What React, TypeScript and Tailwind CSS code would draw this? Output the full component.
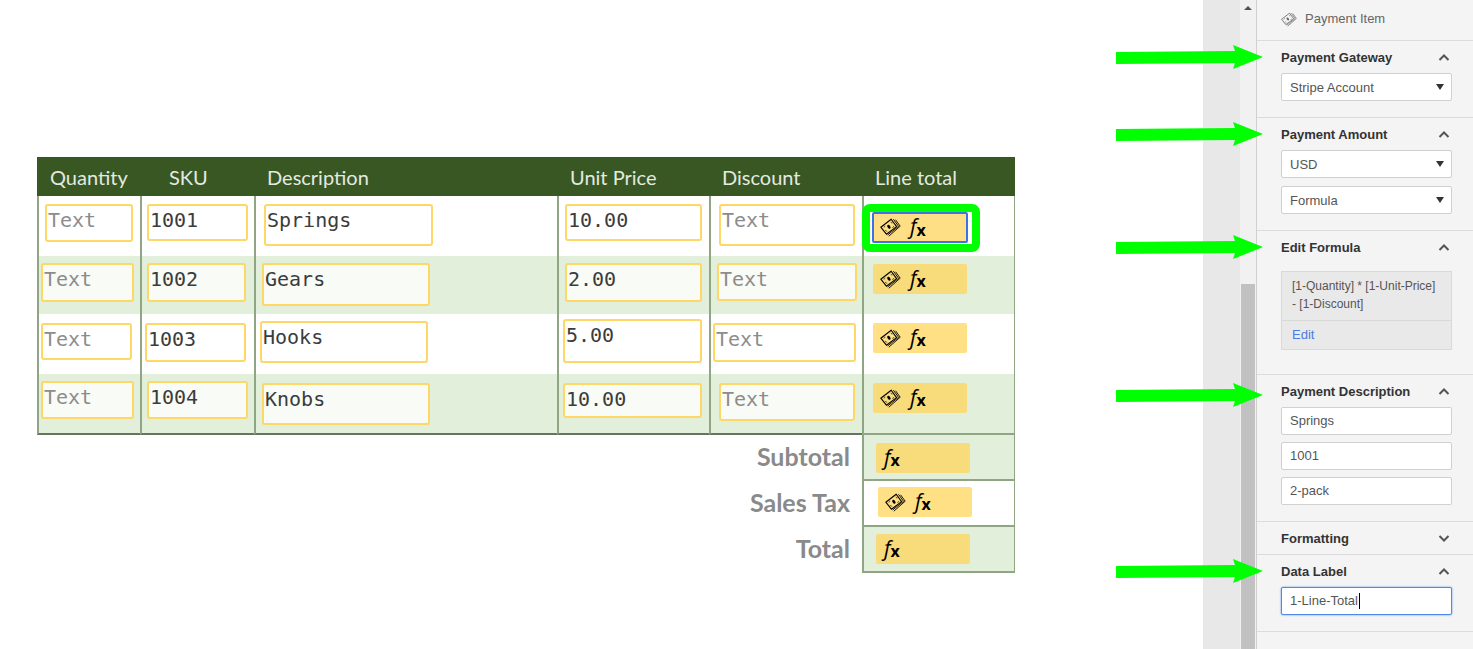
import type { ReactNode } from "react";

type Box = { x: number; y: number; w: number; h: number };
type Field = Box & { value: string };
type Formula = Box & { payment?: boolean; selected?: boolean };

const place = ({ x, y, w, h }: Box) => ({ left: x, top: y, width: w, height: h });

const columns = [
  { label: "Quantity", width: "w-[103px]", pad: "pl-[13px]" },
  { label: "SKU", width: "w-[114px]", pad: "pl-[29px]" },
  { label: "Description", width: "", pad: "pl-[13px]" },
  { label: "Unit Price", width: "w-[152px]", pad: "pl-[13px]" },
  { label: "Discount", width: "w-[153px]", pad: "pl-[13px]" },
  { label: "Line total", width: "w-[153px]", pad: "pl-[13px]" },
];

// Tags are dropped freely on the document; positions are relative to their cell.
const rows: { height: string; tone: string; fields: Field[]; formula: Formula }[] = [
  {
    height: "h-[60px]",
    tone: "bg-white",
    fields: [
      { x: 6, y: 8, w: 88, h: 38, value: "" },
      { x: 5, y: 8, w: 101, h: 37, value: "1001" },
      { x: 8, y: 8, w: 169, h: 42, value: "Springs" },
      { x: 6, y: 8, w: 137, h: 37, value: "10.00" },
      { x: 8, y: 8, w: 136, h: 42, value: "" },
    ],
    formula: { x: 8, y: 16, w: 96, h: 31, payment: true, selected: true },
  },
  {
    height: "h-[58px]",
    tone: "bg-[#e2efda]",
    fields: [
      { x: 2, y: 7, w: 93, h: 39, value: "" },
      { x: 5, y: 7, w: 99, h: 39, value: "1002" },
      { x: 6, y: 7, w: 168, h: 43, value: "Gears" },
      { x: 6, y: 7, w: 137, h: 39, value: "2.00" },
      { x: 6, y: 7, w: 140, h: 38, value: "" },
    ],
    formula: { x: 9, y: 8, w: 94, h: 30, payment: true },
  },
  {
    height: "h-[60px]",
    tone: "bg-white",
    fields: [
      { x: 2, y: 9, w: 91, h: 37, value: "" },
      { x: 3, y: 9, w: 101, h: 39, value: "1003" },
      { x: 4, y: 7, w: 168, h: 42, value: "Hooks" },
      { x: 4, y: 5, w: 139, h: 44, value: "5.00" },
      { x: 2, y: 9, w: 143, h: 39, value: "" },
    ],
    formula: { x: 9, y: 9, w: 94, h: 30, payment: true },
  },
  {
    height: "h-[61px]",
    tone: "bg-[#e2efda]",
    fields: [
      { x: 2, y: 7, w: 93, h: 38, value: "" },
      { x: 5, y: 7, w: 101, h: 38, value: "1004" },
      { x: 6, y: 9, w: 168, h: 42, value: "Knobs" },
      { x: 4, y: 9, w: 139, h: 35, value: "10.00" },
      { x: 8, y: 9, w: 136, h: 38, value: "" },
    ],
    formula: { x: 9, y: 9, w: 94, h: 30, payment: true },
  },
];

const totals: { label: string; tone: string; formula: Formula }[] = [
  { label: "Subtotal", tone: "bg-[#e2efda]", formula: { x: 12, y: 8, w: 94, h: 30 } },
  { label: "Sales Tax", tone: "bg-white", formula: { x: 14, y: 6, w: 94, h: 30, payment: true } },
  { label: "Total", tone: "bg-[#e2efda]", formula: { x: 12, y: 7, w: 94, h: 30 } },
];

function CashIcon({ className }: { className: string }) {
  return (
    <svg viewBox="0 0 21 19" className={className} fill="none" stroke="currentColor" strokeLinejoin="round" aria-hidden="true">
      <path d="M.8 9.2 11.2 1.2 16.6 8.6 6.4 16.2Z" strokeWidth="1.1" />
      <path d="M3.6 9.3c1-.3 1.3-.9 1.2-1.6M10.8 3.8c.3.9 1 1.2 1.7 1M14.1 8.4c-1 .2-1.4.8-1.2 1.5M6.8 13.6c-.2-.9-.9-1.3-1.6-1.1" strokeWidth=".7" />
      <path d="M13.4 1.2 18.6 8.4 7.6 17M15.6 1.8 20.2 8.2 8.8 18.2" strokeWidth=".9" />
      <ellipse cx="8.9" cy="8.8" rx="1.4" ry="2.2" fill="currentColor" stroke="none" transform="rotate(-35 8.9 8.8)" />
    </svg>
  );
}

function FormulaTag({ tag, label }: { tag: Formula; label: string }) {
  return (
    <>
      {tag.selected && (
        <span className="pointer-events-none absolute -left-0.5 top-2 z-10 h-12 w-[118px] rounded-lg border-8 border-[#00ff00]" />
      )}
      <button
        type="button"
        aria-label={label}
        style={place(tag)}
        className={`absolute flex items-center gap-2 rounded-[2px] text-black ${
          tag.selected ? "border-2 border-[#3b74e8] bg-[#ffdf85] pl-1.5" : "bg-[#ffd65b]/75 pl-[7px]"
        }`}
      >
        {tag.payment && <CashIcon className="h-[19px] w-[21px]" />}
        <span className="flex h-full items-center pb-0.5 pl-px font-['Open_Sans',sans-serif] leading-none">
          <i className="text-[21px]">f</i>
          <b className="pt-1.5 text-base leading-none">x</b>
        </span>
      </button>
    </>
  );
}

function Invoice() {
  return (
    <table className="w-full table-fixed border-separate border-spacing-0 text-left">
      <thead>
        <tr className="h-[39px] bg-[#385723] font-['Lato',sans-serif] text-xl text-[#e4eae0]">
          {columns.map((c) => (
            <th key={c.label} className={`p-0 font-normal leading-7 ${c.width} ${c.pad}`}>
              {c.label}
            </th>
          ))}
        </tr>
      </thead>
      <tbody>
        {rows.map((row, r) => (
          <tr key={r} className={`${row.height} ${row.tone}`}>
            {row.fields.map((f, c) => (
              <td
                key={c}
                className={`relative border-l-2 border-[#8fa583] p-0 ${r === 3 ? "border-b-2 border-b-[#687462]" : ""}`}
              >
                <textarea
                  aria-label={`${columns[c].label}, row ${r + 1}`}
                  defaultValue={f.value}
                  placeholder="Text"
                  rows={1}
                  style={place(f)}
                  className="absolute resize-none overflow-hidden whitespace-nowrap rounded-[3px] border-2 border-[#ffd766] bg-white/75 px-px font-['DejaVu_Sans_Mono',monospace] text-xl leading-7 text-[#3c3c3c] outline-none placeholder:text-[#8c8c8c]"
                />
              </td>
            ))}
            <td className={`relative border-l-2 border-r border-[#8fa583] p-0 ${r === 3 ? "border-b-2" : ""}`}>
              <FormulaTag tag={row.formula} label={`Line total, row ${r + 1}`} />
            </td>
          </tr>
        ))}
        {totals.map((t) => (
          <tr key={t.label} className="h-[46px]">
            <th colSpan={5} className="p-0 pb-1 pr-3 text-right font-['Lato',sans-serif] text-[25px] font-bold leading-8 text-[#8a8a8a]">
              {t.label}
            </th>
            <td className={`relative border-b-2 border-l-2 border-r border-[#8fa583] p-0 ${t.tone}`}>
              <FormulaTag tag={t.formula} label={t.label} />
            </td>
          </tr>
        ))}
      </tbody>
    </table>
  );
}

function Arrow({ low }: { low?: boolean }) {
  return (
    <svg
      viewBox="0 0 147 24"
      className={`pointer-events-none absolute -left-[141px] z-20 h-6 w-[147px] ${low ? "top-2" : "top-1"}`}
      aria-hidden="true"
    >
      <path d="M0 7 119 6 117 0 147 12 117 24 119 18 0 19Z" fill="#00ff00" />
    </svg>
  );
}

function Section(props: { title: string; arrow?: boolean; low?: boolean; closed?: boolean; children?: ReactNode }) {
  return (
    <section className={`relative border-t border-[#dcdcdc] pl-6 pr-[21px] ${props.closed ? "" : "pb-4"}`}>
      {props.arrow && <Arrow low={props.low} />}
      <h2>
        <button type="button" className="flex h-8 w-full items-center justify-between pr-0.5 pt-px text-[13px] font-bold text-[#333]">
          {props.title}
          <svg viewBox="0 0 12 8" className="h-2 w-3" fill="none" stroke="#555" strokeWidth="2" aria-hidden="true">
            <path d={props.closed ? "M1.5 1 6 5.5 10.5 1" : "M1.5 6 6 1.5 10.5 6"} />
          </svg>
        </button>
      </h2>
      {props.children}
    </section>
  );
}

function Select({ label, value }: { label: string; value: string }) {
  return (
    <div className="relative">
      <select
        aria-label={label}
        className="block h-7 w-full appearance-none rounded-[2px] border border-[#d0d0d0] bg-white pl-2 pt-px text-[13px] text-[#555]"
      >
        <option>{value}</option>
      </select>
      <svg viewBox="0 0 8 6" className="pointer-events-none absolute right-2 top-[11px] h-1.5 w-2" aria-hidden="true">
        <path d="M0 0H8L4 6Z" fill="#333" />
      </svg>
    </div>
  );
}

function TextBox({ label, value }: { label: string; value: string }) {
  return (
    <input
      type="text"
      aria-label={label}
      defaultValue={value}
      className="h-7 w-full rounded-[2px] border border-[#d0d0d0] bg-white pb-px pl-2 text-[13px] text-[#555]"
    />
  );
}

export default function App() {
  return (
    <div className="flex min-h-screen bg-white">
      <main className="min-w-0 flex-1 pl-[37px] pr-[188px] pt-[157px]">
        <Invoice />
      </main>
      <div className="w-[37px] shrink-0 bg-[#e8e8e8]" />
      <div className="flex w-4 shrink-0 flex-col items-center bg-[#f1f1f1]">
        <svg viewBox="0 0 8 4" className="mb-[274px] mt-1.5 h-1 w-2 shrink-0" aria-hidden="true">
          <path d="M0 4H8L4 0Z" fill="#505050" />
        </svg>
        <div className="w-3.5 flex-1 bg-[#c1c1c1]" />
      </div>
      <aside className="w-[217px] shrink-0 border-l border-[#d0d0d0] bg-[#f4f4f4] font-['Liberation_Sans',sans-serif] text-[13px] text-[#555]">
        <div className="flex h-10 items-center gap-2 pb-0.5 pl-6 text-[#666]">
          <CashIcon className="h-[15px] w-4 text-[#666]" />
          Payment Item
        </div>
        <Section title="Payment Gateway" arrow>
          <Select label="Payment Gateway" value="Stripe Account" />
        </Section>
        <Section title="Payment Amount" arrow>
          <div className="flex flex-col gap-2">
            <Select label="Currency" value="USD" />
            <Select label="Amount type" value="Formula" />
          </div>
        </Section>
        <Section title="Edit Formula" arrow>
          <div className="my-2 border border-[#d9d9d9] bg-[#e9e9e9]">
            <p className="whitespace-nowrap border-b border-[#d9d9d9] px-2.5 pb-[7px] pt-[5px] text-xs leading-[18px]">
              [1-Quantity] * [1-Unit-Price]
              <br />- [1-Discount]
            </p>
            <a href="#edit" className="block px-2.5 text-[13px] leading-7 text-[#4b7be5]">
              Edit
            </a>
          </div>
        </Section>
        <Section title="Payment Description" arrow low>
          <div className="flex flex-col gap-[7px]">
            <TextBox label="Item name" value="Springs" />
            <TextBox label="Item code" value="1001" />
            <TextBox label="Item description" value="2-pack" />
          </div>
        </Section>
        <Section title="Formatting" closed />
        <Section title="Data Label" arrow>
          <div className="relative">
            <input
              type="text"
              aria-label="Data Label"
              defaultValue="1-Line-Total"
              className="block h-7 w-full rounded-[2px] border border-[#4f8ae8] bg-white pb-px pl-2 text-[13px] text-[#555] shadow-[0_0_2px_#4f8ae8] outline-none"
            />
            <span className="absolute left-[78px] top-1.5 h-4 w-px bg-black" />
          </div>
        </Section>
        <div className="border-t border-[#dcdcdc]" />
      </aside>
    </div>
  );
}
